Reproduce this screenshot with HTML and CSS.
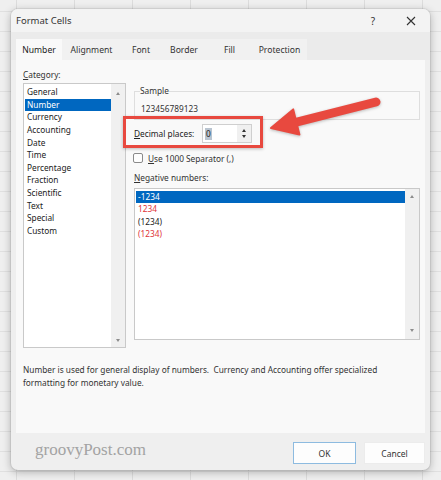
FILE: index.html
```html
<!DOCTYPE html>
<html>
<head>
<meta charset="utf-8">
<link rel="stylesheet" href="styles.css">
</head>
<body>
<div class="dialog">
  <div class="titlebar">
    <span class="title">Format Cells</span>
    <div class="title-btns">
      <span class="tbtn help">?</span>
      <span class="tbtn close">
        <svg width="10" height="10" viewBox="0 0 10 10"><path d="M1 1 L9 9 M9 1 L1 9" stroke="#333" stroke-width="1.1" fill="none"/></svg>
      </span>
    </div>
  </div>
  <div class="tabs">
    <span class="tab active">Number</span>
    <span class="tab">Alignment</span>
    <span class="tab">Font</span>
    <span class="tab">Border</span>
    <span class="tab">Fill</span>
    <span class="tab">Protection</span>
  </div>
  <div class="panel">
    <div class="cols">
      <div class="left">
        <div class="label"><u>C</u>ategory:</div>
        <div class="listbox cat">
          <div class="items">
            <div class="item">General</div>
            <div class="item sel">Number</div>
            <div class="item">Currency</div>
            <div class="item">Accounting</div>
            <div class="item">Date</div>
            <div class="item">Time</div>
            <div class="item">Percentage</div>
            <div class="item">Fraction</div>
            <div class="item">Scientific</div>
            <div class="item">Text</div>
            <div class="item">Special</div>
            <div class="item">Custom</div>
          </div>
          <div class="scroll cat-scroll">
            <span class="arr up"></span>
            <span class="arr down"></span>
          </div>
        </div>
      </div>
      <div class="right">
        <fieldset class="sample">
          <legend>Sample</legend>
          <div class="sample-val">123456789123</div>
        </fieldset>
        <div class="decimal">
          <span class="dec-label"><u>D</u>ecimal places:</span>
          <div class="spinner">
            <div class="spin-input"><span class="selval">0</span></div>
            <div class="spin-btns">
              <span class="arr up dark"></span>
              <span class="arr down dark"></span>
            </div>
          </div>
          <div class="redbox"></div>
        </div>
        <div class="check-row">
          <span class="checkbox"></span>
          <span><u>U</u>se 1000 Separator (,)</span>
        </div>
        <div class="label neg-label"><u>N</u>egative numbers:</div>
        <div class="listbox neg">
          <div class="items">
            <div class="item sel">-1234</div>
            <div class="item red">1234</div>
            <div class="item">(1234)</div>
            <div class="item red">(1234)</div>
          </div>
          <div class="scroll neg-scroll">
            <span class="arr up"></span>
            <span class="arr down"></span>
          </div>
        </div>
      </div>
    </div>
    <p class="desc">Number is used for general display of numbers.&nbsp; Currency and Accounting offer specialized formatting for monetary value.</p>
  </div>
  <div class="footer">
    <span class="watermark">groovyPost.com</span>
    <div class="buttons">
      <span class="btn ok">OK</span>
      <span class="btn cancel">Cancel</span>
    </div>
  </div>
</div>
<svg class="arrow" width="441" height="480" viewBox="0 0 441 480">
  <line x1="297" y1="122" x2="376" y2="102" stroke="#e8493f" stroke-width="9" stroke-linecap="round"/>
  <polygon points="271,128 293.2,109.4 299.4,134.6" fill="#e8493f" stroke="#e8493f" stroke-width="2" stroke-linejoin="round"/>
</svg>
</body>
</html>
```
FILE: styles.css
```css
html, body {
  margin: 0;
  padding: 0;
}
body {
  width: 441px;
  height: 480px;
  overflow: hidden;
  position: relative;
  font-family: "Noto Sans", "Open Sans", sans-serif;
  font-size: 8.3px;
  color: #222;
  background-color: #efefef;
  background-image:
    repeating-linear-gradient(90deg, transparent 0 16px, #dcdcdc 16px 17px, transparent 17px 58px),
    repeating-linear-gradient(180deg, transparent 0 11px, #e0e0e0 11px 12px, transparent 12px 20px);
  padding-top: 9px;
  padding-left: 11px;
  box-sizing: border-box;
}
.dialog {
  width: 419px;
  height: 461px;
  background: #efefef;
  border-radius: 7px;
  box-shadow: 0 2px 8px rgba(0,0,0,0.28), 0 0 0 1px rgba(0,0,0,0.06);
  display: flex;
  flex-direction: column;
  overflow: hidden;
}
.titlebar {
  height: 23px;
  flex: none;
  display: flex;
  align-items: center;
  justify-content: space-between;
  background: #f3f3f3;
  padding-left: 5px;
}
.title {
  font-size: 9.5px;
  color: #333;
}
.title-btns {
  display: flex;
  height: 100%;
}
.tbtn {
  width: 38px;
  display: flex;
  align-items: center;
  justify-content: center;
  color: #333;
}
.help {
  font-size: 10px;
}
.tabs {
  height: 28px;
  flex: none;
  box-sizing: border-box;
  padding: 7px 0 0 5px;
  display: flex;
  background: #ebebeb;
}
.tab {
  height: 21px;
  display: flex;
  align-items: center;
  justify-content: center;
  background: #f1f1f1;
  color: #333;
  font-size: 8.6px;
}
.tab:nth-child(1) { width: 46px; }
.tab:nth-child(2) { width: 59px; }
.tab:nth-child(3) { width: 40px; }
.tab:nth-child(4) { width: 46px; }
.tab:nth-child(5) { width: 45px; }
.tab:nth-child(6) { width: 55px; }
.tab.active {
  background: #f9f9f9;
  color: #222;
}
.panel {
  height: 373px;
  flex: none;
  margin: 0 5px;
  background: #f9f9f9;
  box-sizing: border-box;
  padding: 9px 5px 0 7px;
}
.cols {
  display: flex;
  gap: 8px;
}
.left {
  width: 103px;
  flex: none;
}
.right {
  width: 286px;
  flex: none;
}
.label {
  line-height: 12px;
  height: 12px;
  color: #333;
}
.listbox {
  margin-top: 2px;
  background: #fff;
  border: 1px solid #c9c9c9;
  box-sizing: border-box;
  display: flex;
}
.listbox.cat {
  height: 265px;
}
.listbox.neg {
  height: 152px;
  margin-top: 4px;
}
.items {
  flex: 1;
  padding-top: 2px;
  padding-left: 1px;
}
.cat .item {
  height: 12.65px;
  line-height: 12.65px;
}
.neg .item {
  height: 12.4px;
  line-height: 12.4px;
}
.item {
  padding-left: 2px;
  color: #222;
  white-space: nowrap;
}
.item.sel {
  background: #0067c0;
  color: #fff;
}
.item.red {
  color: #e0343a;
}
.scroll {
  width: 14px;
  flex: none;
  background: #f0f0f0;
  display: flex;
  flex-direction: column;
  justify-content: space-between;
  align-items: center;
  box-sizing: border-box;
}
.cat-scroll {
  padding: 8px 0 5px;
}
.neg-scroll {
  padding: 6px 0 7px;
}
.arr {
  width: 0;
  height: 0;
  border-left: 2.5px solid transparent;
  border-right: 2.5px solid transparent;
}
.arr.up {
  border-bottom: 3px solid #8c8c8c;
}
.arr.down {
  border-top: 3px solid #8c8c8c;
}
.arr.dark.up {
  border-bottom-color: #333;
}
.arr.dark.down {
  border-top-color: #333;
}
.sample {
  margin: 16px 0 0;
  padding: 0 5px 4px;
  border: 1px solid #dedede;
  min-width: 0;
}
.sample legend {
  padding: 0;
  line-height: 12px;
  color: #333;
}
.sample-val {
  margin-top: 6px;
  line-height: 12px;
  padding-left: 1px;
  color: #333;
}
.decimal {
  position: relative;
  margin-top: 4px;
  height: 19px;
  display: flex;
  align-items: center;
}
.dec-label {
  width: 68px;
  color: #222;
}
.spinner {
  width: 50px;
  height: 19px;
  display: flex;
  border: 1px solid #cfcfcf;
  box-sizing: border-box;
  background: #fff;
}
.spin-input {
  flex: 1;
  display: flex;
  align-items: center;
  padding-left: 2px;
}
.selval {
  background: #b9c4d0;
  padding: 0 1px;
  line-height: 12px;
}
.spin-btns {
  width: 14px;
  background: #f0f0f0;
  display: flex;
  flex-direction: column;
  justify-content: space-around;
  align-items: center;
  padding: 2px 0;
  box-sizing: border-box;
}
.redbox {
  position: absolute;
  left: -11px;
  top: -8px;
  width: 140px;
  height: 32px;
  box-sizing: border-box;
  border: 3px solid #e8493f;
  box-shadow: 0 1px 3px rgba(0,0,0,0.25);
}
.check-row {
  margin-top: 9px;
  height: 12px;
  display: flex;
  align-items: center;
  gap: 5px;
  color: #333;
  padding-left: 0;
}
.checkbox {
  width: 10px;
  height: 10px;
  border: 1px solid #8a8a8a;
  border-radius: 2px;
  box-sizing: border-box;
  background: #fdfdfd;
  margin-left: -1px;
}
.neg-label {
  margin-top: 8px;
}
.desc {
  margin: 15px 0 0;
  line-height: 13px;
  color: #333;
  width: 370px;
}
.footer {
  flex: 1;
  display: flex;
  justify-content: space-between;
  align-items: flex-start;
  padding: 9px 5px 0 24px;
}
.watermark {
  font-family: "Liberation Serif", "DejaVu Serif", serif;
  font-size: 17px;
  color: #a3a3a3;
  line-height: 14px;
  margin-top: 1px;
}
.buttons {
  display: flex;
  gap: 8px;
}
.btn {
  height: 22px;
  box-sizing: border-box;
  display: flex;
  align-items: center;
  justify-content: center;
  background: #fdfdfd;
  color: #333;
  font-size: 8.5px;
}
.ok {
  width: 63px;
  border: 1px solid #8dbbe0;
}
.cancel {
  width: 61px;
  border: 1px solid #ececec;
}
.arrow {
  position: absolute;
  left: 0;
  top: 0;
  pointer-events: none;
  filter: drop-shadow(0 1px 1.5px rgba(0,0,0,0.25));
}
```
